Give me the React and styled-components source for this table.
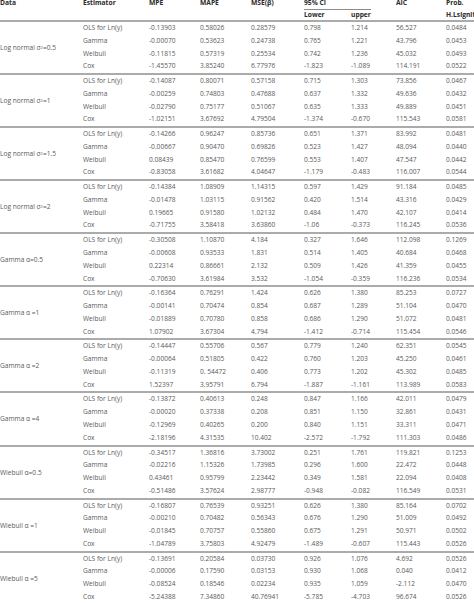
import React from 'react';
import styled, { createGlobalStyle } from 'styled-components';

const GlobalStyle = createGlobalStyle`
  html, body {
    margin: 0;
    padding: 0;
    background: #ffffff;
  }
  body {
    font-family: "Open Sans", "DejaVu Sans", sans-serif;
  }
`;

const COLS = '83px 66px 51px 51px 53px 47px 45px 50px 80px';

const Page = styled.div`
  width: 474px;
  height: 603px;
  overflow: hidden;
  background: #fff;
`;

const Table = styled.div`
  width: 526px;
  display: flex;
  flex-direction: column;
  margin-top: -2px;
`;

const Head = styled.div`
  display: grid;
  grid-template-columns: ${COLS};
  grid-template-rows: 10.5px 11.5px;
`;

const HeadCell = styled.div`
  grid-column: ${(p) => p.$col};
  grid-row: ${(p) => p.$row || 1};
  font-size: 6.7px;
  line-height: ${(p) => (p.$row === 2 ? '11.5px' : '10.5px')};
  font-weight: 700;
  color: #2a2a2a;
  white-space: nowrap;
`;

const CiLabel = styled.span`
  display: block;
  width: 67px;
  height: 11px;
  border-bottom: 1px solid #8c8c8c;
`;

const Group = styled.div`
  display: grid;
  grid-template-columns: ${COLS};
  grid-template-rows: repeat(4, 12.78px);
  border-top: 2px solid #ababab;
`;

const DataCell = styled.div`
  grid-column: 1;
  grid-row: 1 / span 4;
  display: flex;
  align-items: center;
  font-size: 6.6px;
  color: #5a5a5a;
  white-space: nowrap;
`;

const Sup = styled.sup`
  font-size: 4px;
  line-height: 0;
  vertical-align: 3px;
`;

const Cell = styled.div`
  font-size: 6.6px;
  line-height: 12.78px;
  color: #5a5a5a;
  white-space: nowrap;
`;

const groups = [
  {
    label: <>Log normal σ<Sup>2</Sup>=0.5</>,
    rows: [
      ['-0.13903', '0.58026', '0.28579', '0.798', '1.214', '56.527', '0.0484'],
      ['-0.00070', '0.53623', '0.24738', '0.765', '1.221', '43.796', '0.0453'],
      ['-0.11815', '0.57319', '0.25534', '0.742', '1.236', '45.032', '0.0493'],
      ['-1.45570', '3.85240', '6.77976', '-1.823', '-1.089', '114.191', '0.0522'],
    ],
  },
  {
    label: <>Log normal σ<Sup>2</Sup>=1</>,
    rows: [
      ['-0.14087', '0.80071', '0.57158', '0.715', '1.303', '73.856', '0.0467'],
      ['-0.00259', '0.74803', '0.47688', '0.637', '1.332', '49.636', '0.0432'],
      ['-0.02790', '0.75177', '0.51067', '0.635', '1.333', '49.889', '0.0451'],
      ['-1.02151', '3.67692', '4.79504', '-1.374', '-0.670', '115.543', '0.0581'],
    ],
  },
  {
    label: <>Log normal σ<Sup>2</Sup>=1.5</>,
    rows: [
      ['-0.14266', '0.96247', '0.85736', '0.651', '1.371', '83.992', '0.0481'],
      ['-0.00667', '0.90470', '0.69826', '0.523', '1.427', '48.094', '0.0440'],
      ['0.08439', '0.85470', '0.76599', '0.553', '1.407', '47.547', '0.0442'],
      ['-0.83058', '3.61682', '4.04647', '-1.179', '-0.483', '116.007', '0.0544'],
    ],
  },
  {
    label: <>Log normal σ<Sup>2</Sup>=2</>,
    rows: [
      ['-0.14384', '1.08909', '1.14315', '0.597', '1.429', '91.184', '0.0485'],
      ['-0.01478', '1.03115', '0.91562', '0.420', '1.514', '43.316', '0.0429'],
      ['0.19665', '0.91580', '1.02132', '0.484', '1.470', '42.107', '0.0414'],
      ['-0.71755', '3.58418', '3.63860', '-1.06', '-0.373', '116.245', '0.0536'],
    ],
  },
  {
    label: 'Gamma α=0.5',
    rows: [
      ['-0.30508', '1.10870', '4.184', '0.327', '1.646', '112.098', '0.1269'],
      ['-0.00608', '0.93533', '1.831', '0.514', '1.405', '40.684', '0.0468'],
      ['0.22314', '0.86661', '2.132', '0.509', '1.426', '41.359', '0.0455'],
      ['-0.70630', '3.61984', '3.532', '-1.054', '-0.359', '116.236', '0.0534'],
    ],
  },
  {
    label: 'Gamma α =1',
    rows: [
      ['-0.16364', '0.76291', '1.424', '0.626', '1.380', '85.253', '0.0727'],
      ['-0.00141', '0.70474', '0.854', '0.687', '1.289', '51.104', '0.0470'],
      ['-0.01889', '0.70780', '0.858', '0.686', '1.290', '51.072', '0.0481'],
      ['1.07902', '3.67304', '4.794', '-1.412', '-0.714', '115.454', '0.0546'],
    ],
  },
  {
    label: 'Gamma α =2',
    rows: [
      ['-0.14447', '0.55706', '0.567', '0.779', '1.240', '62.351', '0.0545'],
      ['-0.00064', '0.51805', '0.422', '0.760', '1.203', '45.250', '0.0461'],
      ['-0.11319', '0. 54472', '0.406', '0.773', '1.202', '45.302', '0.0485'],
      ['1.52397', '3.95791', '6.794', '-1.887', '-1.161', '113.989', '0.0583'],
    ],
  },
  {
    label: 'Gamma α =4',
    rows: [
      ['-0.13872', '0.40613', '0.248', '0.847', '1.166', '42.011', '0.0479'],
      ['-0.00020', '0.37338', '0.208', '0.851', '1.150', '32.861', '0.0431'],
      ['-0.12969', '0.40265', '0.200', '0.840', '1.151', '33.311', '0.0471'],
      ['-2.18196', '4.31535', '10.402', '-2.572', '-1.792', '111.303', '0.0486'],
    ],
  },
  {
    label: 'Wiebull α=0.5',
    rows: [
      ['-0.34517', '1.36816', '3.73002', '0.251', '1.761', '119.821', '0.1253'],
      ['-0.02216', '1.15326', '1.73985', '0.296', '1.600', '22.472', '0.0448'],
      ['0.43461', '0.95799', '2.23442', '0.349', '1.581', '22.094', '0.0408'],
      ['-0.51486', '3.57624', '2.98777', '-0.948', '-0.082', '116.549', '0.0531'],
    ],
  },
  {
    label: 'Wiebull α =1',
    rows: [
      ['-0.16807', '0.76539', '0.93251', '0.626', '1.380', '85.164', '0.0702'],
      ['-0.00210', '0.70482', '0.56343', '0.676', '1.290', '51.009', '0.0492'],
      ['-0.01845', '0.70757', '0.55860', '0.675', '1.291', '50.971', '0.0502'],
      ['-1.04789', '3.75803', '4.92479', '-1.489', '-0.607', '115.443', '0.0526'],
    ],
  },
  {
    label: 'Wiebull α =5',
    rows: [
      ['-0.13691', '0.20584', '0.03730', '0.926', '1.076', '4.692', '0.0526'],
      ['-0.00006', '0.17590', '0.03153', '0.930', '1.068', '0.040', '0.0412'],
      ['-0.08524', '0.18546', '0.02234', '0.935', '1.059', '-2.112', '0.0470'],
      ['-5.24388', '7.34860', '40.76941', '-5.785', '-4.703', '96.674', '0.0526'],
    ],
  },
];

const estimators = ['OLS for Ln(y)', 'Gamma', 'Weibull', 'Cox'];

const TableHead = () => (
  <Head>
    <HeadCell $col={1}>Data</HeadCell>
    <HeadCell $col={2}>Estimator</HeadCell>
    <HeadCell $col={3}>MPE</HeadCell>
    <HeadCell $col={4}>MAPE</HeadCell>
    <HeadCell $col={5}>MSE(β)</HeadCell>
    <HeadCell $col="6 / span 2"><CiLabel>95% CI</CiLabel></HeadCell>
    <HeadCell $col={6} $row={2}>Lower</HeadCell>
    <HeadCell $col={7} $row={2}>upper</HeadCell>
    <HeadCell $col={8}>AIC</HeadCell>
    <HeadCell $col={9}>Prob.</HeadCell>
    <HeadCell $col={9} $row={2}>H.Lsignificance</HeadCell>
  </Head>
);

const App = () => (
  <Page>
    <GlobalStyle />
    <Table>
      <TableHead />
      {groups.map((group, gi) => (
        <Group key={gi}>
          <DataCell>{group.label}</DataCell>
          {group.rows.map((row, ri) => (
            <React.Fragment key={ri}>
              <Cell>{estimators[ri]}</Cell>
              {row.map((value, vi) => (
                <Cell key={vi}>{value}</Cell>
              ))}
            </React.Fragment>
          ))}
        </Group>
      ))}
    </Table>
  </Page>
);

export default App;
